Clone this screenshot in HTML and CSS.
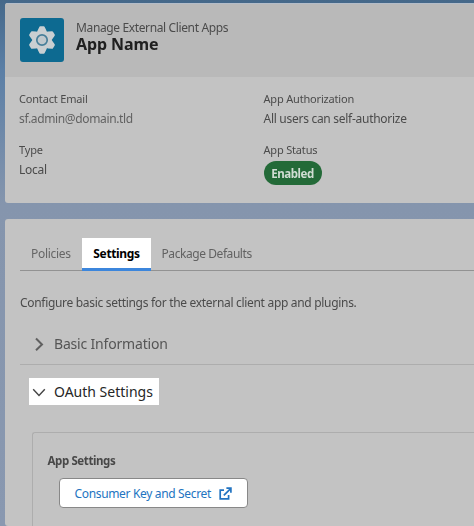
FILE: index.html
```html
<!DOCTYPE html>
<html lang="en">
<head>
<meta charset="utf-8">
<title>App Name</title>
<link rel="stylesheet" href="styles.css">
</head>
<body>
<main class="page">
  <section class="card summary">
    <header class="summary-header">
      <svg class="app-icon" viewBox="0 0 44 44">
        <rect width="44" height="44" rx="3" fill="#0d6a91"/>
        <g fill="#c9cfd2">
          <circle cx="22" cy="22" r="10"/>
          <g stroke="#c9cfd2" stroke-width="2.2" stroke-linejoin="round">
            <path id="tooth" d="M18.6 13 20.3 9.4H23.7L25.4 13Z"/>
            <use href="#tooth" transform="rotate(60 22 22)"/>
            <use href="#tooth" transform="rotate(120 22 22)"/>
            <use href="#tooth" transform="rotate(180 22 22)"/>
            <use href="#tooth" transform="rotate(240 22 22)"/>
            <use href="#tooth" transform="rotate(300 22 22)"/>
          </g>
        </g>
        <circle cx="22" cy="22" r="5.2" fill="#bfc8cd" stroke="#477f9a" stroke-width="1.7"/>
      </svg>
      <div class="titles">
        <p class="eyebrow">Manage External Client Apps</p>
        <h1 class="app-name">App Name</h1>
      </div>
    </header>
    <dl class="details">
      <div class="field"><dt class="label">Contact Email</dt><dd class="value email">sf.admin@domain.tld</dd></div>
      <div class="field"><dt class="label">App Authorization</dt><dd class="value">All users can self-authorize</dd></div>
      <div class="field"><dt class="label">Type</dt><dd class="value">Local</dd></div>
      <div class="field"><dt class="label">App Status</dt><dd class="badge"><span class="soft">Enabled</span></dd></div>
    </dl>
  </section>

  <section class="card config">
    <nav class="tabs">
      <a class="tab policies">Policies</a>
      <a class="tab active">Settings</a>
      <a class="tab package">Package Defaults</a>
    </nav>
    <p class="intro">Configure basic settings for the external client app and plugins.</p>
    <div class="section-row">
      <svg class="chevron dim" viewBox="0 0 14 14"><path d="M4 1.5 10 7.5 4 13.2"/></svg>
      <h2 class="section-title basic">Basic Information</h2>
    </div>
    <div class="section-open">
      <div class="highlight">
        <svg class="chevron" viewBox="0 0 14 14"><path d="M1.2 4.2 7 10.5 12.8 4.2"/></svg>
        <h2 class="section-title oauth">OAuth Settings</h2>
      </div>
    </div>
    <div class="panel">
      <h3 class="panel-title">App Settings</h3>
      <button class="consumer"><span class="consumer-text">Consumer Key and Secret</span>
        <svg class="external" viewBox="0 0 13 13"><path d="M5 3.2H1.2V11.8H9.6V8"/><path d="M4.8 8.4 11.4 1.8M7.4 1.2H11.9V5.7"/></svg>
      </button>
    </div>
  </section>
</main>
</body>
</html>
```
FILE: styles.css
```css
* { box-sizing: border-box; margin: 0; padding: 0; }

body {
  width: 474px;
  height: 526px;
  overflow: hidden;
  font-family: "Noto Sans", sans-serif;
  color: #4b4b4b;
  background: linear-gradient(#456889 0, #5b7fa6 70px, #8595ad 205px, #8998b0 100%);
}

.page {
  display: flex;
  flex-direction: column;
  gap: 16px;
  height: 526px;
  padding: 3px 0 0 5px;
}

.card { background: #c3c3c3; border-radius: 3px 0 0 3px; }

.summary { height: 200px; overflow: hidden; }

.summary-header {
  display: flex;
  gap: 12px;
  height: 74px;
  padding: 15px 0 0 15px;
  background: #b9b9b9;
  border-top: 1px solid #b4bdc9;
}

.app-icon { width: 44px; height: 44px; margin-top: -1px; }

.eyebrow, .app-name, .label, .value, .soft, .policies, .package, .intro, .basic, .panel-title {
  filter: blur(0.4px);
}

.eyebrow { font-size: 12px; line-height: 17px; letter-spacing: -0.37px; }

.app-name { font-size: 16px; line-height: 17px; color: #202020; letter-spacing: -0.1px; }

.details {
  display: grid;
  grid-template-columns: 244.5px 1fr;
  grid-template-rows: 51px 51px;
  padding: 13px 0 0 14px;
}

.label { font-size: 11px; line-height: 18px; letter-spacing: -0.18px; }

.value { font-size: 12px; line-height: 22px; letter-spacing: -0.28px; white-space: nowrap; }

.email { color: #626262; letter-spacing: -0.36px; }

.badge {
  width: 58px;
  height: 24px;
  margin-top: 2px;
  border-radius: 12px;
  background: #236a38;
  color: #d0ddd3;
  font-size: 11.5px;
  font-weight: 700;
  line-height: 25px;
  letter-spacing: -0.45px;
  text-align: center;
}

.soft { display: inline-block; }

.config { flex: 1; padding: 19px 0 0 15px; overflow: hidden; }

.tabs { display: flex; height: 33px; border-bottom: 1px solid #929292; }

.tab { font-size: 12px; line-height: 31px; white-space: nowrap; }

.policies { width: 62px; padding-left: 11px; color: #666; letter-spacing: -0.3px; }

.active {
  width: 69px;
  height: 33px;
  background: #fff;
  border-bottom: 3px solid #3c86dc;
  color: #000;
  font-weight: 700;
  letter-spacing: -0.36px;
  text-align: center;
}

.package { padding-left: 10.5px; color: #626262; letter-spacing: -0.43px; }

.intro { margin-top: 22px; font-size: 12px; line-height: 20px; letter-spacing: -0.31px; white-space: nowrap; }

.section-row {
  display: flex;
  align-items: center;
  gap: 8px;
  height: 45px;
  margin-top: 7px;
  padding: 4px 0 0 12px;
  border-bottom: 1px solid #adadad;
}

.section-title { font-size: 14px; font-weight: 400; line-height: 22px; white-space: nowrap; }

.basic { color: #555; letter-spacing: -0.18px; }

.chevron { width: 14px; height: 14px; fill: none; stroke: #444; stroke-width: 1.4; }

.dim { stroke: #606060; stroke-width: 2; }

.section-open { height: 67px; padding: 13px 0 0 9px; }

.highlight {
  display: flex;
  align-items: center;
  gap: 8px;
  width: 130px;
  height: 27px;
  padding-left: 3px;
  background: #fff;
}

.oauth { color: #262626; }

.panel {
  height: 110px;
  margin: 0 0 0 12px;
  padding: 18px 0 0 14.5px;
  border: solid #adadad;
  border-width: 1px 0 0 1px;
  border-radius: 3px 0 0 0;
}

.panel-title { font-size: 11.5px; line-height: 20px; letter-spacing: -0.4px; color: #484848; }

.consumer {
  display: flex;
  align-items: center;
  justify-content: space-between;
  width: 189px;
  height: 30px;
  margin: 7px 0 0 11px;
  padding: 0 15px 0 15px;
  border: 1px solid #888;
  border-radius: 4px;
  background: #fff;
  color: #2374c1;
  font: 12px "Noto Sans", sans-serif;
  letter-spacing: -0.34px;
  white-space: nowrap;
}

.external { width: 13px; height: 13px; fill: none; stroke: #2374c1; stroke-width: 1.7; }
```
